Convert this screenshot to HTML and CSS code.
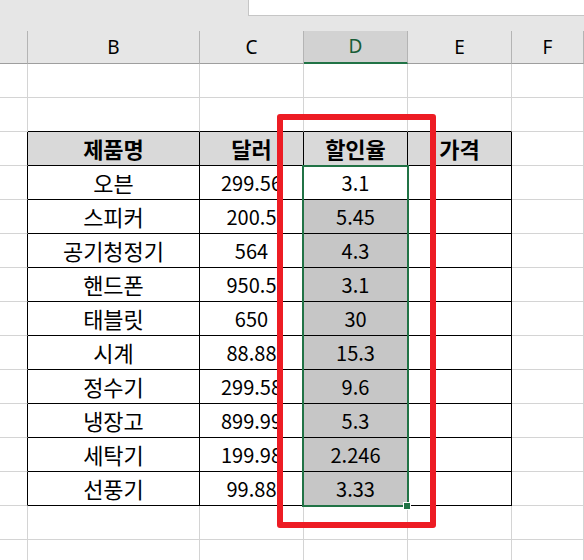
FILE: index.html
```html
<!DOCTYPE html>
<html lang="ko">
  <head>
    <meta charset="utf-8" />
    <title>할인율</title>
    <link rel="stylesheet" href="styles.css">
  </head>
  <body>
    <div class="topbar">
      <div class="formula"></div>
    </div>

    <div class="sheet">
      <table class="grid">
        <colgroup>
          <col class="col-a"><col class="col-b"><col class="col-c"><col class="col-d"><col class="col-e"><col class="col-f">
        </colgroup>
        <thead>
          <tr><th></th><th>B</th><th>C</th><th class="active">D</th><th>E</th><th>F</th></tr>
        </thead>
        <tbody>
          <tr><td></td><td></td><td></td><td></td><td></td><td></td></tr>
          <tr class="above"><td></td><td></td><td></td><td></td><td></td><td></td></tr>
          <tr class="data head"><td></td><td>제품명</td><td>달러</td><td>할인율</td><td>가격</td><td></td></tr>
          <tr class="data"><td></td><td>오븐</td><td>299.56</td><td>3.1</td><td></td><td></td></tr>
          <tr class="data"><td></td><td>스피커</td><td>200.5</td><td class="picked">5.45</td><td></td><td></td></tr>
          <tr class="data"><td></td><td>공기청정기</td><td>564</td><td class="picked">4.3</td><td></td><td></td></tr>
          <tr class="data"><td></td><td>핸드폰</td><td>950.5</td><td class="picked">3.1</td><td></td><td></td></tr>
          <tr class="data"><td></td><td>태블릿</td><td>650</td><td class="picked">30</td><td></td><td></td></tr>
          <tr class="data"><td></td><td>시계</td><td>88.88</td><td class="picked">15.3</td><td></td><td></td></tr>
          <tr class="data"><td></td><td>정수기</td><td>299.58</td><td class="picked">9.6</td><td></td><td></td></tr>
          <tr class="data"><td></td><td>냉장고</td><td>899.99</td><td class="picked">5.3</td><td></td><td></td></tr>
          <tr class="data"><td></td><td>세탁기</td><td>199.98</td><td class="picked">2.246</td><td></td><td></td></tr>
          <tr class="data"><td></td><td>선풍기</td><td>99.88</td><td class="picked">3.33</td><td></td><td></td></tr>
          <tr><td></td><td></td><td></td><td></td><td></td><td></td></tr>
          <tr><td></td><td></td><td></td><td></td><td></td><td></td></tr>
        </tbody>
      </table>

      <div class="selection"><span class="handle"></span></div>
      <div class="callout"></div>
    </div>
  </body>
</html>
```

FILE: styles.css
```css
body {
  margin: 0;
  width: 584px;
  height: 560px;
  overflow: hidden;
  background: #fff;
  font-family: "Noto Sans CJK KR", "Noto Sans", sans-serif;
}

.topbar {
  height: 31px;
  background: #e6e6e6;
  display: flex;
  justify-content: flex-end;
  align-items: flex-start;
}

.formula {
  width: 335px;
  height: 15px;
  background: #fff;
  border-left: 1px solid #c6c6c6;
  border-bottom: 1px solid #c6c6c6;
}

.sheet {
  position: relative;
}

.grid {
  table-layout: fixed;
  width: 584px;
  border-collapse: separate;
  border-spacing: 0;
}

.col-a { width: 28px; }
.col-b { width: 172px; }
.col-c { width: 104px; }
.col-d { width: 104px; }
.col-e { width: 104px; }
.col-f { width: 72px; }

.grid th {
  height: 32px;
  padding: 0;
  background: #e6e6e6;
  border-right: 1px solid #b4b4b4;
  border-bottom: 1px solid #9e9e9e;
  font-family: "Noto Sans", "Liberation Sans", sans-serif;
  font-size: 19px;
  font-weight: normal;
  color: #000;
  line-height: 31px;
}

.grid th.active {
  height: 31px;
  background: #d2d2d2;
  color: #185c37;
  border-bottom: 2px solid #217346;
}

.grid td {
  height: 33px;
  padding: 0;
  border-right: 1px solid #d4d4d4;
  border-bottom: 1px solid #d4d4d4;
  font-size: 20px;
  line-height: 33px;
  text-align: center;
  white-space: nowrap;
  overflow: hidden;
  color: #000;
}

/* black box round B3:E13 */
.above td:nth-child(n+2):nth-child(-n+5) {
  border-bottom-color: #000;
}

.data td:first-child {
  border-right-color: #000;
}

.data td:nth-child(n+2):nth-child(-n+5) {
  border-right-color: #000;
  border-bottom-color: #000;
}

.data td:nth-child(2),
.head td {
  font-size: 22px;
}

.head td:nth-child(n+2):nth-child(-n+5) {
  background: #d9d9d9;
  font-weight: bold;
}

.grid td.picked {
  background: #c6c6c6;
}

.selection {
  position: absolute;
  left: 302px;
  top: 134px;
  width: 107px;
  height: 342px;
  box-sizing: border-box;
  border: 2px solid #217346;
}

.handle {
  position: absolute;
  right: -4px;
  bottom: -5px;
  width: 6px;
  height: 6px;
  background: #217346;
  border: 1px solid #fff;
}

.callout {
  position: absolute;
  left: 277px;
  top: 83px;
  width: 159px;
  height: 414px;
  box-sizing: border-box;
  border: 6px solid #ed1c24;
  border-radius: 3px;
}
```
